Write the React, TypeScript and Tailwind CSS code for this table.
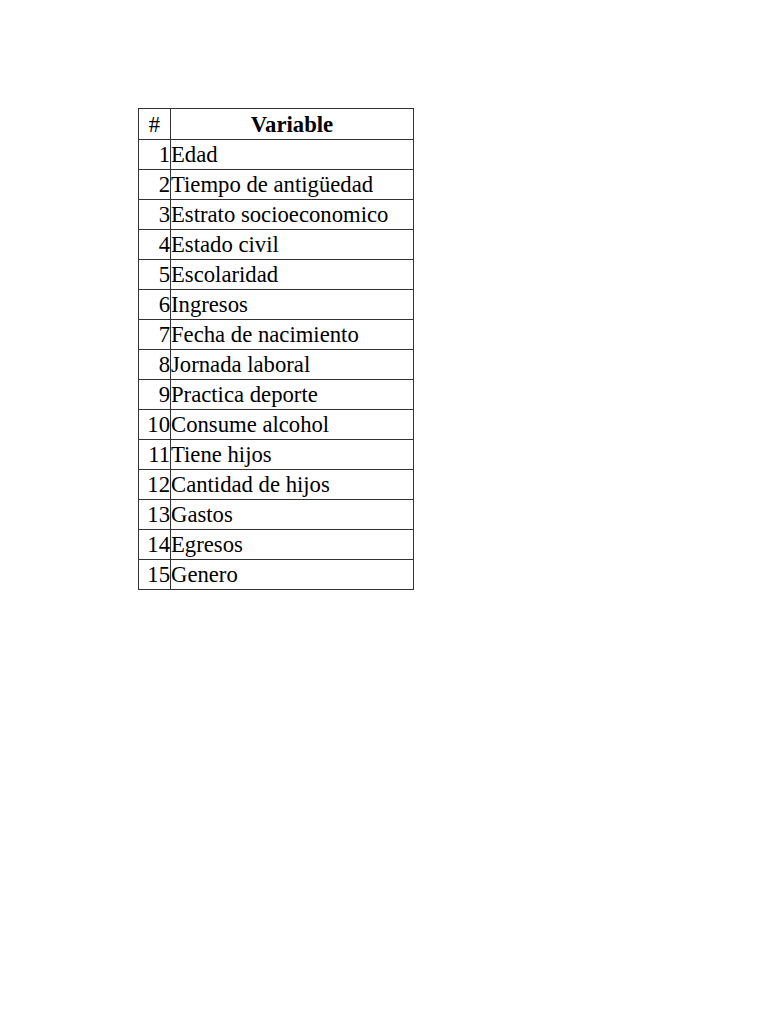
const variables = [
  'Edad',
  'Tiempo de antigüedad',
  'Estrato socioeconomico',
  'Estado civil',
  'Escolaridad',
  'Ingresos',
  'Fecha de nacimiento',
  'Jornada laboral',
  'Practica deporte',
  'Consume alcohol',
  'Tiene hijos',
  'Cantidad de hijos',
  'Gastos',
  'Egresos',
  'Genero',
];

export default function App() {
  return (
    <div className="min-h-[1024px] w-[768px] bg-white pt-[108px] pl-[138px] font-['Liberation_Serif',serif] text-[22.7px] leading-none text-black">
      <table className="border-collapse">
        <thead>
          <tr className="h-[31px]">
            <th className="w-[32px] border border-[#333] p-0 pt-[2px] text-center font-normal">#</th>
            <th className="w-[243px] border border-[#333] p-0 pt-[2px] text-center font-bold">Variable</th>
          </tr>
        </thead>
        <tbody>
          {variables.map((v, i) => (
            <tr key={v} className="h-[30px]">
              <td className="border border-[#333] p-0 pt-[2px] text-right">{i + 1}</td>
              <td className="border border-[#333] p-0 pt-[2px] text-left">{v}</td>
            </tr>
          ))}
        </tbody>
      </table>
    </div>
  );
}
